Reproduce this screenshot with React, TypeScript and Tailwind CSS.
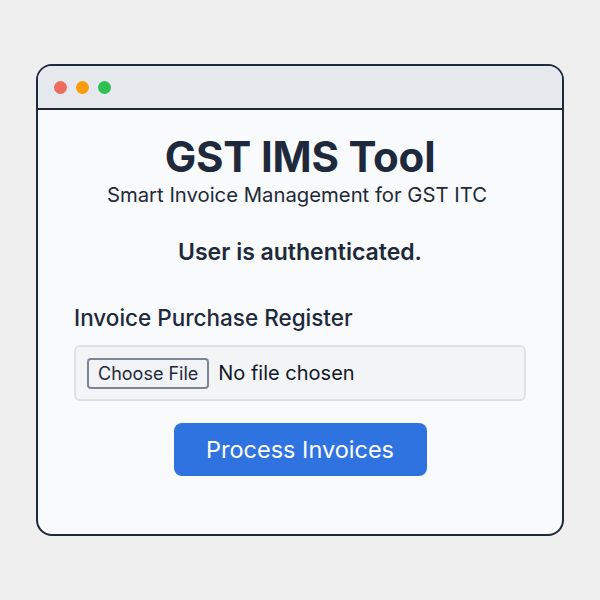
import React from 'react';

const App: React.FC = () => {
  return (
    <div
      className="w-[600px] h-[600px] bg-[#efeff0] flex items-center justify-center"
      style={{ fontFamily: 'Inter, "Liberation Sans", sans-serif' }}
    >
      <div className="w-[528px] h-[472px] rounded-[16px] border-2 border-[#1e293b] bg-[#f8fafc] overflow-hidden flex flex-col">
        <div className="h-[44px] bg-[#e5e8ed] border-b-2 border-[#1e293b] flex items-center gap-[9px] pl-[16px] shrink-0">
          <span className="w-[13px] h-[13px] rounded-full bg-[#ee6b60]" />
          <span className="w-[13px] h-[13px] rounded-full bg-[#fd9c0a]" />
          <span className="w-[13px] h-[13px] rounded-full bg-[#30bf55]" />
        </div>
        <div className="flex flex-col items-center pt-[21px] text-[#1e293b]">
          <h1 className="text-[42px] leading-[52px] font-bold tracking-[-0.2px]">GST IMS Tool</h1>
          <p className="text-[20.3px] leading-[26px] mt-[-1px] pr-[6px] text-[#1f2937]">Smart Invoice Management for GST ITC</p>
          <p className="text-[23px] leading-[30px] font-semibold mt-[29px]">User is authenticated.</p>
          <div className="self-stretch px-[36px] mt-[36px]">
            <label className="block text-[22.5px] leading-[30px] font-medium">Invoice Purchase Register</label>
            <div className="mt-[12px] h-[56px] rounded-[6px] border-2 border-[#dde1e6] bg-[#f3f4f6] flex items-center px-[11px] gap-[9px]">
              <button className="h-[31px] px-[9px] rounded-[4px] border-2 border-[#7b8593] bg-[#f1f3f6] text-[18px] text-[#1f2937]">
                Choose File
              </button>
              <span className="text-[20px] text-[#111827]">No file chosen</span>
            </div>
          </div>
          <button className="mt-[22px] w-[253px] h-[53px] rounded-[8px] bg-[#2f73e0] text-white text-[23.5px]">
            Process Invoices
          </button>
        </div>
      </div>
    </div>
  );
};

export default App;
